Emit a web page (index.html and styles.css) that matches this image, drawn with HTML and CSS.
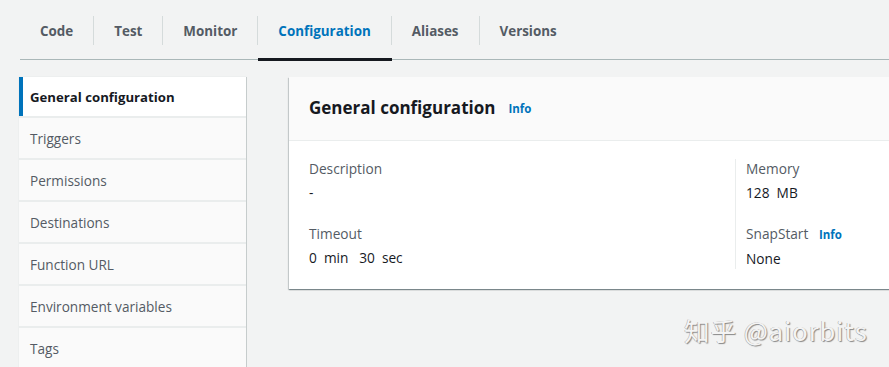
FILE: index.html
```html
<!DOCTYPE html>
<html>
<head>
<meta charset="utf-8">
<link rel="stylesheet" href="styles.css">
</head>
<body>
<div class="page">
  <nav class="tabs">
    <div class="tab"><span>Code</span></div>
    <div class="tab"><span>Test</span></div>
    <div class="tab"><span>Monitor</span></div>
    <div class="tab active"><span>Configuration</span></div>
    <div class="tab"><span>Aliases</span></div>
    <div class="tab last"><span>Versions</span></div>
  </nav>
  <div class="content">
    <ul class="side">
      <li class="item active">General configuration</li>
      <li class="item">Triggers</li>
      <li class="item">Permissions</li>
      <li class="item">Destinations</li>
      <li class="item">Function URL</li>
      <li class="item">Environment variables</li>
      <li class="item">Tags</li>
    </ul>
    <section class="card">
      <header class="card-head">
        <h2>General configuration</h2>
        <a class="info">Info</a>
      </header>
      <div class="card-body">
        <div class="col left">
          <div class="field">
            <div class="label">Description</div>
            <div class="value">-</div>
          </div>
          <div class="field">
            <div class="label">Timeout</div>
            <div class="value">0&nbsp; min&nbsp;&nbsp; 30&nbsp; sec</div>
          </div>
        </div>
        <div class="col right">
          <div class="field">
            <div class="label">Memory</div>
            <div class="value">128&nbsp; MB</div>
          </div>
          <div class="field">
            <div class="label">SnapStart <a class="info small">Info</a></div>
            <div class="value">None</div>
          </div>
        </div>
      </div>
    </section>
  </div>
  <div class="watermark">知乎 @aiorbits</div>
</div>
</body>
</html>
```
FILE: styles.css
```css
* { box-sizing: border-box; }
html, body { margin: 0; padding: 0; }
body {
  background: #f2f3f3;
  font-family: "Open Sans", "Noto Sans", sans-serif;
  color: #16191f;
  width: 889px;
  height: 367px;
  overflow: hidden;
}
.page { position: relative; height: 367px; }
.tabs {
  display: flex;
  margin-left: 20px;
  height: 60px;
  border-bottom: 1px solid #aab7b8;
  align-items: stretch;
}
.tab {
  position: relative;
  display: flex;
  align-items: center;
  padding: 2px 21px 0 20px;
  font-size: 13.4px;
  font-weight: 700;
  color: #545b64;
  height: 60px;
}
.tab::after {
  content: "";
  position: absolute;
  right: 0;
  top: 16px;
  height: 29px;
  width: 1px;
  background: #d5dbdb;
}
.tab.last::after { display: none; }
.tab.active { color: #0073bb; }
.tab.active::before {
  content: "";
  position: absolute;
  left: 0;
  right: 0;
  bottom: -1px;
  height: 3px;
  background: #16191f;
}
.content {
  display: flex;
  align-items: flex-start;
  margin-top: 17px;
  padding-left: 19px;
  gap: 43px;
}
.side {
  list-style: none;
  margin: 0;
  padding: 0;
  width: 227px;
  flex: none;
  box-shadow: 1px 0 0 #c6cccc, 0 0 1px #d5dbdb;
}
.item {
  height: 42px;
  display: flex;
  align-items: center;
  padding-left: 11px;
  font-size: 13.6px;
  color: #545b64;
  background: #fafafa;
  border-top: 2px solid #eaeded;
}
.item:first-child { border-top: none; height: 39px; font-size: 13.2px; }
.item.active {
  background: #fff;
  color: #16191f;
  font-weight: 700;
  border-left: 4px solid #0073bb;
  padding-left: 7px;
}
.card {
  flex: 1;
  background: #fff;
  box-shadow: 0 1px 1px 0 rgba(0,28,36,0.3), 1px 1px 1px 0 rgba(0,28,36,0.15), -1px 1px 1px 0 rgba(0,28,36,0.15);
  margin-right: -20px;
}
.card-head {
  height: 64px;
  background: #fafafa;
  border-bottom: 1px solid #eaeded;
  display: flex;
  align-items: center;
  padding-left: 20px;
  padding-bottom: 3px;
}
.card-head h2 {
  margin: 0;
  font-size: 17px;
  font-weight: 700;
  color: #16191f;
}
.info {
  font-size: 11.5px;
  font-weight: 700;
  color: #0073bb;
  margin-left: 13px;
  padding-top: 3px;
}
.info.small { margin-left: 7px; padding-top: 0; }
.card-body {
  display: flex;
  padding: 18px 0 20px 0;
}
.col { display: flex; flex-direction: column; gap: 21px; }
.col.left { width: 447px; padding-left: 20px; border-right: 1px solid #eaeded; }
.col.right { padding-left: 10px; }
.label { font-size: 13.7px; color: #545b64; line-height: 20px; }
.value { font-size: 13.7px; color: #16191f; line-height: 20px; margin-top: 4px; }
.watermark {
  position: absolute;
  left: 684px;
  top: 311px;
  font-size: 25.5px;
  color: #f4f4f4;
  text-shadow: 1px 1px 1px #888, -0.5px -0.5px 0 #aaa;
  font-family: "Noto Sans CJK SC", "Noto Sans", sans-serif;
  letter-spacing: 1px;
}
```
